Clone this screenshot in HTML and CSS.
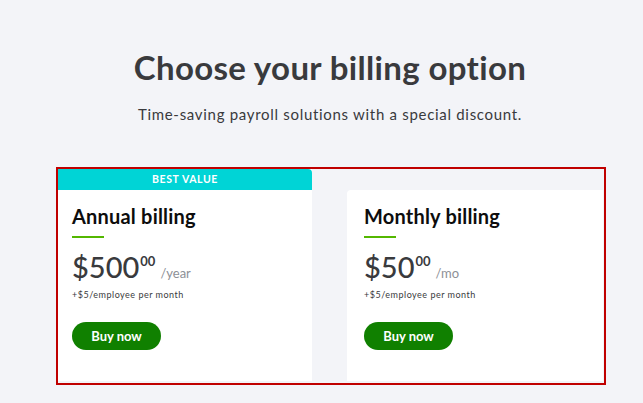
FILE: index.html
```html
<!DOCTYPE html>
<html>
	<head>
		<meta charset="utf-8" />
		<title>Choose your billing option</title>
		<link rel="stylesheet" href="styles.css">
	</head>
	<body>
		<div class="page">
			<h1 class="title">Choose your billing option</h1>
			<p class="subtitle">Time-saving payroll solutions with a special discount.</p>
			<div class="plans">
				<div class="card annual">
					<div class="badge">BEST VALUE</div>
					<div class="cardBody">
						<h2 class="planName">Annual billing</h2>
						<div class="rule"></div>
						<div class="price"><span class="amount">$500</span><sup class="cents">00</sup><span class="period">/year</span></div>
						<div class="extra">+$5/employee per month</div>
						<button class="buy">Buy now</button>
					</div>
				</div>
				<div class="card monthly">
					<div class="cardBody">
						<h2 class="planName">Monthly billing</h2>
						<div class="rule"></div>
						<div class="price"><span class="amount">$50</span><sup class="cents">00</sup><span class="period">/mo</span></div>
						<div class="extra">+$5/employee per month</div>
						<button class="buy">Buy now</button>
					</div>
				</div>
			</div>
		</div>
	</body>
</html>
```

FILE: styles.css
```css
*,
*::before,
*::after{
	box-sizing: border-box;
}
body{
	margin: 0;
	background: #f3f4f8;
	font-family: Lato, "Open Sans", sans-serif;
	color: #393a3d;
}
.page{
	padding-top: 46px;
}
.title,
.subtitle{
	padding-left: 17px;
	text-align: center;
}
.title{
	margin: 0;
	font-size: 33px;
	font-weight: 700;
	line-height: 42px;
	letter-spacing: 0.35px;
}
.subtitle{
	margin: 16px 0 0;
	font-size: 15px;
	line-height: 20px;
	letter-spacing: 0.7px;
}
.plans{
	margin: 43px 0 0 56px;
	width: 550px;
	height: 218px;
	border: 2px solid #c00000;
	display: flex;
	gap: 35px;
}
.card{
	background: #fff;
	height: 212px;
}
.annual{
	width: 254px;
}
.monthly{
	width: 256px;
	margin-top: 21px;
	height: 191px;
	border-radius: 4px 0 0 0;
}
.badge{
	height: 21px;
	background: #00d4d6;
	color: #fff;
	font-size: 10.5px;
	font-weight: 700;
	letter-spacing: 0.6px;
	text-align: center;
	line-height: 21px;
	border-radius: 0 4px 0 0;
}
.cardBody{
	padding: 14px 14px 0;
}
.monthly .cardBody{
	padding-left: 17px;
}
.planName{
	margin: 0;
	font-size: 20px;
	font-weight: 700;
	line-height: 24px;
	letter-spacing: 0.2px;
	color: #0d0d0d;
}
.rule{
	width: 32px;
	height: 2px;
	background: #53b700;
	margin-top: 8px;
}
.price{
	margin-top: 13px;
	height: 32px;
	display: flex;
	align-items: flex-start;
}
.amount{
	font-size: 29px;
	line-height: 32px;
	font-weight: 500;
}
.cents{
	font-size: 13px;
	font-weight: 700;
	line-height: 14px;
	margin-left: 1px;
	margin-top: 3px;
}
.period{
	font-size: 13px;
	color: #8d9096;
	margin-left: 5px;
	margin-top: 14px;
}
.extra{
	margin-top: 6px;
	font-size: 9px;
	line-height: 12px;
	letter-spacing: 0.5px;
}
.buy{
	margin-top: 21px;
	width: 89px;
	height: 28px;
	border: none;
	border-radius: 14px;
	background: #108000;
	color: #fff;
	font-family: Lato, sans-serif;
	font-size: 13px;
	font-weight: 700;
	padding: 0;
	cursor: pointer;
}
```
